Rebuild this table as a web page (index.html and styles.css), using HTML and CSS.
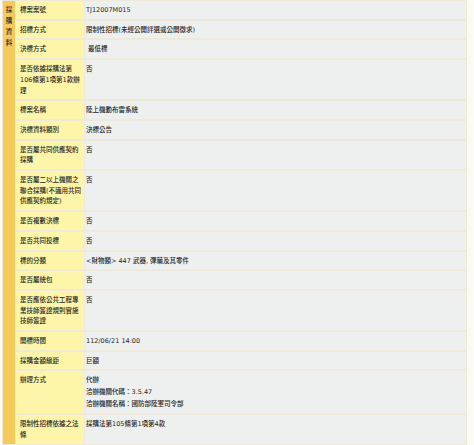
FILE: index.html
```html
<!DOCTYPE html>
<html lang="zh-Hant">
<head>
<meta charset="utf-8">
<title>採購資料</title>
<link rel="stylesheet" href="styles.css">
</head>
<body>
<div class="sheet">
  <div class="section">採購資料</div>

  <div class="label">標案案號</div>
  <div class="value">TJ12007M015</div>

  <div class="label">招標方式</div>
  <div class="value">限制性招標(未經公開評選或公開徵求)</div>

  <div class="label">決標方式</div>
  <div class="value">&nbsp;最低標</div>

  <div class="label">是否依據採購法第106條第1項第1款辦理</div>
  <div class="value">否</div>

  <div class="label">標案名稱</div>
  <div class="value">陸上機動布雷系統</div>

  <div class="label">決標資料類別</div>
  <div class="value">決標公告</div>

  <div class="label">是否屬共同供應契約採購</div>
  <div class="value">否</div>

  <div class="label">是否屬二以上機關之聯合採購(不適用共同供應契約規定)</div>
  <div class="value">否</div>

  <div class="label">是否複數決標</div>
  <div class="value">否</div>

  <div class="label">是否共同投標</div>
  <div class="value">否</div>

  <div class="label">標的分類</div>
  <div class="value">&lt;財物類&gt; 447 武器, 彈藥及其零件</div>

  <div class="label">是否屬統包</div>
  <div class="value">否</div>

  <div class="label">是否應依公共工程專業技師簽證規則實施技師簽證</div>
  <div class="value">否</div>

  <div class="label">開標時間</div>
  <div class="value">112/06/21 14:00</div>

  <div class="label">採購金額級距</div>
  <div class="value">巨額</div>

  <div class="label">辦理方式</div>
  <div class="value value-lines">
    <div>代辦</div>
    <div>洽辦機關代碼：3.5.47</div>
    <div>洽辦機關名稱：國防部陸軍司令部</div>
  </div>

  <div class="label">限制性招標依據之法條</div>
  <div class="value">採購法第105條第1項第4款</div>
</div>
<div class="fade"></div>
</body>
</html>
```

FILE: styles.css
```css
html, body {
  margin: 0;
  padding: 0;
}

body {
  background: #fbfaf5;
  font-family: "DejaVu Sans", "Noto Sans CJK TC", sans-serif;
  font-size: 6.5px;
  font-weight: 500;
  line-height: 10.7px;
  color: #262626;
  overflow: hidden;
}

.sheet {
  margin-left: 2px;
  width: 465px;
  padding: 1px;
  box-sizing: border-box;
  background: #efe9da;
  display: grid;
  grid-template-columns: 12px 68px 1fr;
  column-gap: 1px;
  row-gap: 2px;
}

.section {
  grid-column: 1;
  grid-row: 1 / 18;
  background: #f5c95b;
  padding-top: 4px;
  line-height: 11px;
  text-align: center;
  word-break: break-all;
  padding-left: 2.5px;
  padding-right: 2.5px;
  box-sizing: border-box;
}

.label {
  grid-column: 2;
  background: #fdf5a8;
  padding: 4px 2px 3px 4px;
}

.value {
  grid-column: 3;
  background: #eef0f0;
  padding: 4px 2px 3px 1px;
}

.value-lines {
  line-height: 12px;
  padding-top: 3px;
}

.fade {
  height: 12px;
  background: linear-gradient(to bottom, #d6d6d6, #ececec);
}
```
